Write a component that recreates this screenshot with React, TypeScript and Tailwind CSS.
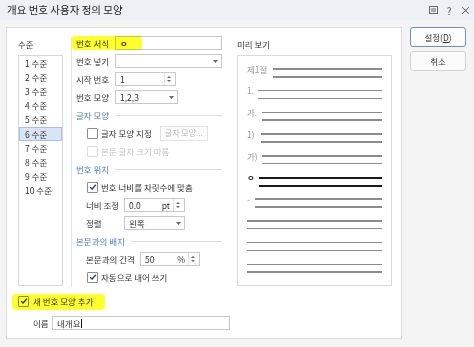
import type { ReactNode } from 'react'

const font = { fontFamily: '"Noto Sans CJK KR", "Noto Sans", sans-serif' }

const levels = ['1 수준', '2 수준', '3 수준', '4 수준', '5 수준', '6 수준', '7 수준', '8 수준', '9 수준', '10 수준']

const preview = [
  { label: '제1절', indent: 26, dark: false },
  { label: '1.', indent: 11, dark: false },
  { label: '가.', indent: 15, dark: false },
  { label: '1)', indent: 14, dark: false },
  { label: '가)', indent: 15, dark: false },
  { label: 'ㅇ', indent: 12, dark: true },
  { label: '-', indent: 8, dark: false },
  { label: '', indent: 0, dark: false },
  { label: '', indent: 0, dark: false },
  { label: '', indent: 0, dark: false }
]

function Check({ checked = false, disabled = false }: { checked?: boolean; disabled?: boolean }) {
  return (
    <span
      className={`relative flex h-[11px] w-[11px] shrink-0 items-center justify-center rounded-[1px] border bg-white ${
        disabled ? 'border-[#dcdcdc]' : 'border-[#8c8c8c]'
      }`}
    >
      {checked ? (
        <svg width="8" height="8" viewBox="0 0 8 8">
          <path d="M1.2 4.2 L3.1 6 L6.8 1.8" fill="none" stroke="#1f3f7a" strokeWidth="1.3" />
        </svg>
      ) : null}
    </span>
  )
}

function Caret() {
  return (
    <svg width="5" height="3" viewBox="0 0 5 3" className="shrink-0">
      <path d="M0 0 H5 L2.5 3 Z" fill="#666" />
    </svg>
  )
}

function Spinner() {
  return (
    <span className="flex h-full w-[8px] shrink-0 flex-col items-center justify-center gap-[2px] border-l border-[#e2e2e2]">
      <svg width="4" height="2" viewBox="0 0 4 2">
        <path d="M0 2 L2 0 L4 2 Z" fill="#666" />
      </svg>
      <svg width="4" height="2" viewBox="0 0 4 2">
        <path d="M0 0 H4 L2 2 Z" fill="#666" />
      </svg>
    </span>
  )
}

function Box({ w, children }: { w: string; children?: ReactNode }) {
  return (
    <div className={`flex h-[14px] ${w} items-center border border-[#c9c9c9] bg-white pl-[4px] pr-[3px] text-[8.5px] text-[#333]`}>
      {children}
    </div>
  )
}

function Header({ text }: { text: string }) {
  return (
    <div className="flex h-[18px] items-center gap-[6px]">
      <span className="text-[8.5px] text-[#4f7fc4]">{text}</span>
      <span className="h-px flex-1 bg-[#dedede]" />
    </div>
  )
}

function CheckRow({ text, checked, disabled }: { text: string; checked?: boolean; disabled?: boolean }) {
  return (
    <div className="flex h-[18px] items-center gap-[3px] pl-[11px]">
      <Check checked={checked} disabled={disabled} />
      <span className={`text-[8.5px] ${disabled ? 'text-[#c2c2c2]' : 'text-[#333]'}`}>{text}</span>
    </div>
  )
}

export default function App() {
  return (
    <div className="h-[347px] w-[474px] overflow-hidden bg-[#f4f4f4] text-[#333]" style={font}>
      <div className="flex h-[20px] items-center bg-[#edf0f5] pl-[7px] pr-[6px]">
        <span className="text-[10.5px] text-[#222]">개요 번호 사용자 정의 모양</span>
        <div className="ml-auto flex items-center gap-[7px] text-[10px] text-[#555]">
          <svg width="9" height="9" viewBox="0 0 9 9">
            <rect x="0.5" y="0.5" width="8" height="7" fill="none" stroke="#666" />
            <path d="M2 3 H7 M2 5 H7" stroke="#666" />
          </svg>
          <span className="w-[8px] text-center">?</span>
          <span className="w-[8px] text-center text-[11px]">×</span>
        </div>
      </div>

      <div className="flex pl-[6px] pt-[7px]">
        <div className="flex h-[312px] w-[396px] flex-col border border-[#dedede] bg-white">
          <div className="flex pl-[11px] pt-[6px]">
            <div className="flex w-[45px] flex-col">
              <div className="flex h-[20px] items-center text-[8.5px]">수준</div>
              <div className="mt-[1px] h-[231px] border border-[#d6d6d6] bg-white">
                {levels.map((level, i) => (
                  <div
                    key={level}
                    className={`flex h-[14.2px] items-center border pl-[5px] text-[8.5px] ${
                      i === 5 ? 'border-[#a9c1e6] bg-[#d9e5f5]' : 'border-transparent'
                    }`}
                  >
                    {level}
                  </div>
                ))}
              </div>
            </div>

            <div className="ml-[8px] mt-[3px] h-[250px] w-px bg-[#e4e4e4]" />

            <div className="ml-[4px] flex w-[146px] flex-col">
              <div className="relative flex h-[18px] items-center">
                <span className="w-[39px] text-[8.5px]">번호 서식</span>
                <Box w="w-[107px]">
                  <span className="font-bold">ㅇ</span>
                </Box>
                <span className="pointer-events-none absolute left-[-4px] top-[2px] h-[14px] w-[70px] rounded-[3px] bg-[#ffff2e] mix-blend-multiply" />
              </div>
              <div className="flex h-[18px] items-center">
                <span className="w-[39px] text-[8.5px]">번호 넣기</span>
                <Box w="w-[107px]">
                  <span className="flex-1" />
                  <Caret />
                </Box>
              </div>
              <div className="flex h-[18px] items-center">
                <span className="w-[39px] text-[8.5px]">시작 번호</span>
                <Box w="w-[61px]">
                  <span className="flex-1">1</span>
                  <Spinner />
                </Box>
              </div>
              <div className="flex h-[18px] items-center">
                <span className="w-[39px] text-[8.5px]">번호 모양</span>
                <Box w="w-[63px]">
                  <span className="flex-1">1,2,3</span>
                  <Caret />
                </Box>
              </div>
              <Header text="글자 모양" />
              <div className="flex h-[18px] items-center gap-[3px] pl-[11px]">
                <Check />
                <span className="text-[8.5px]">글자 모양 지정</span>
                <span className="ml-[5px] flex h-[15px] w-[48px] items-center justify-center border border-[#e2e2e2] bg-[#fcfcfc] text-[8px] text-[#b8b8b8]">
                  글자 모양...
                </span>
              </div>
              <CheckRow text="본문 글자 크기 따름" disabled />
              <Header text="번호 위치" />
              <CheckRow text="번호 너비를 자릿수에 맞춤" checked />
              <div className="flex h-[18px] items-center pl-[10px]">
                <span className="w-[38px] text-[8.5px]">너비 조정</span>
                <Box w="w-[61px]">
                  <span className="flex-1">0.0</span>
                  <span className="pr-[3px]">pt</span>
                  <Spinner />
                </Box>
              </div>
              <div className="flex h-[18px] items-center pl-[10px]">
                <span className="w-[38px] text-[8.5px]">정렬</span>
                <Box w="w-[61px]">
                  <span className="flex-1">왼쪽</span>
                  <Caret />
                </Box>
              </div>
              <Header text="본문과의 배치" />
              <div className="flex h-[18px] items-center pl-[10px]">
                <span className="w-[54px] text-[8.5px]">본문과의 간격</span>
                <Box w="w-[60px]">
                  <span className="flex-1">50</span>
                  <span className="pr-[3px]">%</span>
                  <Spinner />
                </Box>
              </div>
              <CheckRow text="자동으로 내어 쓰기" checked />
            </div>

            <div className="ml-[15px] flex w-[155px] flex-col">
              <div className="flex h-[20px] items-center text-[8.5px]">미리 보기</div>
              <div className="mt-[1px] flex h-[231px] flex-col border border-[#dadada] bg-white px-[9px] pt-[12px]">
                {preview.map((item, i) => (
                  <div key={i} className="flex h-[22px] flex-col">
                    <div className="flex h-[2px] items-center">
                      <span
                        className={`shrink-0 whitespace-nowrap text-[8.5px] leading-none ${item.dark ? 'font-bold text-[#222]' : 'text-[#999]'}`}
                        style={{ width: item.indent }}
                      >
                        {item.label}
                      </span>
                      <span className={`flex-1 ${item.dark ? 'h-[2px] bg-[#1a1a1a]' : 'h-[1.5px] bg-[#8c8c8c]'}`} />
                    </div>
                    <div
                      className={`mt-[6px] ${item.dark ? 'h-[2px] bg-[#1a1a1a]' : 'h-[1.5px] bg-[#8c8c8c]'}`}
                      style={{ marginLeft: item.indent }}
                    />
                  </div>
                ))}
              </div>
            </div>
          </div>

          <div className="relative ml-[11px] mt-[5px] flex h-[18px] items-center gap-[4px]">
            <Check checked />
            <span className="text-[8.5px]">새 번호 모양 추가</span>
            <span className="pointer-events-none absolute left-[-6px] top-[2px] h-[16px] w-[93px] rounded-[4px] bg-[#ffff2e] mix-blend-multiply" />
          </div>
          <div className="ml-[26px] mt-[4px] flex h-[18px] items-center">
            <span className="w-[19px] text-[8.5px]">이름</span>
            <Box w="w-[178px]">
              <span>내개요</span>
              <span className="ml-[1px] h-[9px] w-px bg-[#111]" />
            </Box>
          </div>
        </div>

        <div className="ml-[8px] flex w-[56px] flex-col gap-[4px]">
          <div className="flex h-[20px] items-center justify-center rounded-[3px] border border-[#6d8fc9] bg-[#fdfdfd] text-[8.5px]">
            설정(<span className="underline">D</span>)
          </div>
          <div className="flex h-[20px] items-center justify-center rounded-[3px] border border-[#d3d3d3] bg-[#fbfbfb] text-[8.5px]">
            취소
          </div>
        </div>
      </div>
    </div>
  )
}
